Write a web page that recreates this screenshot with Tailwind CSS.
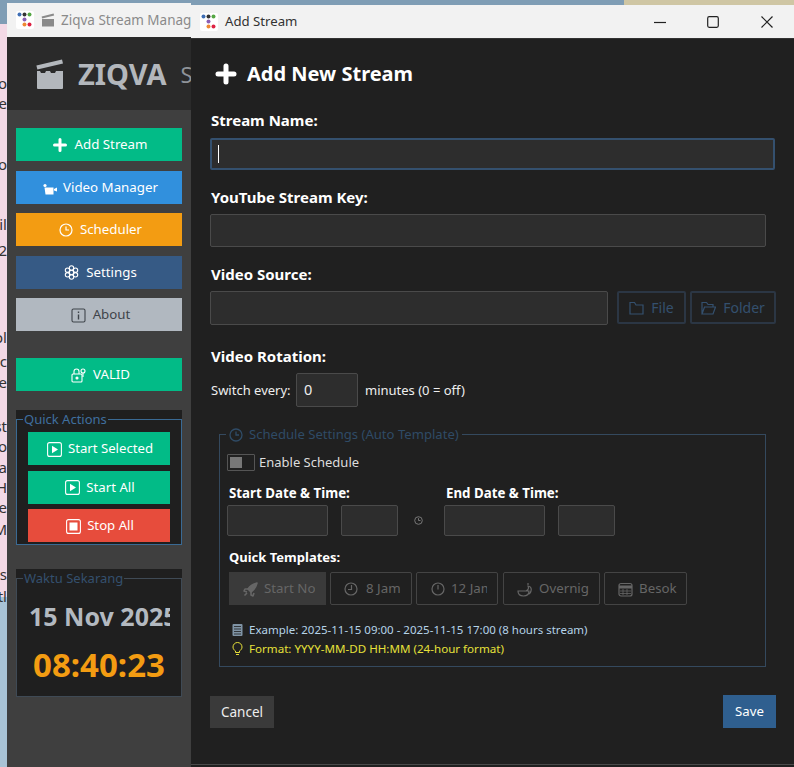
<!doctype html>
<html lang="en">
  <head>
    <meta charset="UTF-8" />
    <title>Add Stream</title>
    <script src="https://cdn.jsdelivr.net/npm/@tailwindcss/browser@4"></script>
  </head>
  <body class="relative w-[794px] h-[767px] overflow-hidden bg-[#a9c3d6] font-['Noto_Sans','Open_Sans',sans-serif]">
    <!-- desktop behind the windows -->
    <div class="absolute top-0 left-0 right-0 h-[24px] flex">
      <div class="w-[624px] bg-[#7f9db5]"></div>
      <div class="flex-1 bg-[#cfc6a4]"></div>
    </div>
    <div class="absolute top-[24px] left-0 w-[7px] h-[573px] bg-[#f3d9e6]"></div>
    <div class="absolute top-0 left-0 w-[7px] h-[767px] overflow-hidden text-[15px] leading-none text-[#333]">
      <div class="absolute top-[76px] right-0">o</div>
      <div class="absolute top-[96px] right-0">e</div>
      <div class="absolute top-[157px] right-0">o</div>
      <div class="absolute top-[217px] right-0">il</div>
      <div class="absolute top-[243px] right-0">2</div>
      <div class="absolute top-[330px] right-0">ol</div>
      <div class="absolute top-[354px] right-0">ac</div>
      <div class="absolute top-[375px] right-0">ke</div>
      <div class="absolute top-[419px] right-0">st</div>
      <div class="absolute top-[439px] right-0">Co</div>
      <div class="absolute top-[460px] right-0">na</div>
      <div class="absolute top-[480px] right-0">H</div>
      <div class="absolute top-[500px] right-0">re</div>
      <div class="absolute top-[522px] right-0">M</div>
      <div class="absolute top-[567px] right-0">os</div>
      <div class="absolute top-[589px] right-0">tl</div>
    </div>

    <!-- main window -->
    <div class="absolute left-[7px] top-[3px] w-[184px] h-[764px] flex flex-col overflow-hidden bg-[#3f3f3f]">
      <div class="h-[34px] shrink-0 bg-[#f2f2f2] flex items-center pl-[9px] gap-[7px] whitespace-nowrap text-[13.5px] text-[#8a8a8a]">
        <svg class="w-[18px] h-[18px] shrink-0" viewBox="0 0 18 18">
          <rect width="18" height="18" rx="2" fill="#fff" />
          <circle cx="3.5" cy="3.5" r="2" fill="#3f6fb5" />
          <circle cx="8.5" cy="3.5" r="2" fill="#333" />
          <circle cx="13.5" cy="3.5" r="2" fill="#55a744" />
          <circle cx="8.5" cy="8.5" r="2" fill="#8b5fb5" />
          <circle cx="8.5" cy="13.5" r="2" fill="#ee8833" />
          <circle cx="13.5" cy="13.5" r="2" fill="#dd2244" />
        </svg>
        <svg class="w-[14px] h-[14px] shrink-0" viewBox="0 0 14 14" fill="#8a8a8a">
          <path d="M1 6h12v7.5H1z" />
          <path d="M.6 3.5 12.6.6l.5 2L1.1 5.5z" />
        </svg>
        <span class="-ml-[1px]">Ziqva Stream Manager</span>
      </div>
      <div class="h-[73px] shrink-0 bg-[#2a2a2a] flex items-center pl-[29px] whitespace-nowrap text-[#b3b7bc]">
        <svg class="w-[28px] h-[30px] shrink-0" viewBox="0 0 28 30" fill="#b3b7bc">
          <path d="M1 12h26v17a1 1 0 0 1-1 1H2a1 1 0 0 1-1-1z" />
          <path d="M.4 6.5 26 .6l1 4L1.4 10.6z" />
          <path d="M4 12h6l-1 2H5zM14 12h6l-1 2h-4z" fill="#2a2a2a" />
        </svg>
        <span class="ml-[14px] text-[29px] font-bold leading-none">ZIQVA</span>
        <span class="ml-[14px] text-[22px] leading-none text-[#8f9399]">S</span>
      </div>
      <div class="flex-1 pl-[9px] pt-[18px] w-[175px]">
        <div class="flex flex-col gap-[9.5px] text-[13.3px]">
          <div class="h-[33px] pl-[3px] pt-[1px] bg-[#02bb87] flex items-center justify-center gap-[7px] text-white">
            <svg class="w-[14px] h-[14px]" viewBox="0 0 14 14" fill="none" stroke="#fff" stroke-width="3" stroke-linecap="round"><path d="M7 1.5v11M1.5 7h11" /></svg>
            Add Stream
          </div>
          <div class="h-[33px] pl-[3px] pt-[1px] bg-[#3190dd] flex items-center justify-center gap-[6px] text-white">
            <svg class="w-[14px] h-[12px] mt-[3px]" viewBox="0 0 14 12" fill="#fff">
              <circle cx="2" cy="2.5" r="1.6" />
              <path d="M1.5 4.5h9v7h-8zM11 6l3-1.5v4L11 7.5z" />
            </svg>
            Video Manager
          </div>
          <div class="h-[33px] pl-[3px] pt-[1px] bg-[#f39c12] flex items-center justify-center gap-[7px] text-white">
            <svg class="w-[14px] h-[14px]" viewBox="0 0 14 14" fill="none" stroke="#fff" stroke-width="1.2"><circle cx="7" cy="7" r="6" /><path d="M7 3.5V7h3" /></svg>
            Scheduler
          </div>
          <div class="h-[33px] pl-[3px] pt-[1px] bg-[#365a85] flex items-center justify-center gap-[7px] text-white">
            <svg class="w-[15px] h-[15px]" viewBox="0 0 15 15" fill="none" stroke="#fff" stroke-width="1.1"><circle cx="7.5" cy="7.5" r="2.2" /><circle cx="7.5" cy="3" r="2.2" /><circle cx="7.5" cy="12" r="2.2" /><circle cx="3.5" cy="5.2" r="2.2" /><circle cx="11.5" cy="5.2" r="2.2" /><circle cx="3.5" cy="9.8" r="2.2" /><circle cx="11.5" cy="9.8" r="2.2" /></svg>
            Settings
          </div>
          <div class="h-[33px] pl-[3px] pt-[1px] bg-[#b1b8c0] flex items-center justify-center gap-[7px] text-[#3f444a]">
            <svg class="w-[15px] h-[15px]" viewBox="0 0 15 15" fill="none" stroke="#3f444a" stroke-width="1.1"><rect x="1" y="1" width="13" height="13" rx="1.5" /><path d="M7.5 6.5V11.5M7.5 3.5v1.4" stroke-width="1.4" /></svg>
            About
          </div>
        </div>
        <div class="h-[33px] pl-[3px] pt-[1px] mt-[27px] bg-[#02bb87] flex items-center justify-center gap-[7px] text-[13.3px] text-white">
          <svg class="w-[15px] h-[15px]" viewBox="0 0 15 15" fill="none" stroke="#fff" stroke-width="1.1"><rect x="1" y="6" width="10" height="8" rx="1" /><path d="M3 6V3.5a2.5 2.5 0 0 1 5 0V6" /><circle cx="6" cy="10" r="1" fill="#fff" /><circle cx="12" cy="3" r="2" /><path d="M12 5v4" /></svg>
          VALID
        </div>
        <!-- quick actions -->
        <div class="relative mt-[19px] h-[135px] pt-[22px] px-[12px] bg-[#1f1f1f] flex flex-col gap-[5.5px] text-[13.2px]">
          <div class="absolute left-0 right-0 top-[9px] bottom-0 border border-[#3a6a94]"></div>
          <div class="absolute left-[7px] top-0 px-[1px] bg-[#1f1f1f] text-[13px] leading-[19px] text-[#3f6f9f]">Quick Actions</div>
          <div class="relative h-[33px] pl-[2px] pt-[1px] bg-[#02bb87] flex items-center justify-center gap-[6px] text-white">
            <svg class="w-[15px] h-[15px]" viewBox="0 0 15 15"><rect x=".6" y=".6" width="13.8" height="13.8" rx="2" fill="none" stroke="#fff" stroke-width="1.1" /><path d="M5 3.8v7.4l6-3.7z" fill="#fff" /></svg>
            Start Selected
          </div>
          <div class="relative h-[33px] pl-[2px] pt-[1px] bg-[#02bb87] flex items-center justify-center gap-[6px] text-white">
            <svg class="w-[15px] h-[15px]" viewBox="0 0 15 15"><rect x=".6" y=".6" width="13.8" height="13.8" rx="2" fill="none" stroke="#fff" stroke-width="1.1" /><path d="M5 3.8v7.4l6-3.7z" fill="#fff" /></svg>
            Start All
          </div>
          <div class="relative h-[33px] pl-[2px] pt-[1px] bg-[#e74c3c] flex items-center justify-center gap-[6px] text-white">
            <svg class="w-[15px] h-[15px]" viewBox="0 0 15 15"><rect x=".6" y=".6" width="13.8" height="13.8" rx="2" fill="none" stroke="#fff" stroke-width="1.1" /><rect x="3.5" y="3.5" width="8" height="8" fill="#fff" /></svg>
            Stop All
          </div>
        </div>
        <!-- clock -->
        <div class="relative mt-[24px] h-[128px] bg-[#1f1f1f]">
          <div class="absolute left-0 right-0 top-[9px] bottom-0 border border-[#3f4a55]"></div>
          <div class="absolute left-[7px] top-0 px-[1px] bg-[#1f1f1f] text-[13px] leading-[19px] text-[#34506e]">Waktu Sekarang</div>
          <div class="relative pt-[32px] pl-[13px] w-[154px] overflow-hidden whitespace-nowrap text-[25px] leading-[30px] font-bold text-[#b3b9c0]">15 Nov 2025</div>
          <div class="relative mt-[14px] text-center text-[33px] leading-[40px] font-bold text-[#f39c12]">08:40:23</div>
        </div>
      </div>
    </div>

    <!-- add stream dialog -->
    <div class="absolute left-[191px] top-[5px] w-[603px] h-[762px] flex flex-col bg-[#202020]">
      <div class="h-[34px] shrink-0 bg-[#f2f2f2] border-b border-[#333] flex items-center pl-[9px] text-[13.2px] text-[#333]">
        <svg class="w-[18px] h-[18px] shrink-0" viewBox="0 0 18 18">
          <rect width="18" height="18" rx="2" fill="#fff" />
          <circle cx="3.5" cy="3.5" r="2" fill="#3f6fb5" />
          <circle cx="8.5" cy="3.5" r="2" fill="#333" />
          <circle cx="13.5" cy="3.5" r="2" fill="#55a744" />
          <circle cx="8.5" cy="8.5" r="2" fill="#8b5fb5" />
          <circle cx="8.5" cy="13.5" r="2" fill="#ee8833" />
          <circle cx="13.5" cy="13.5" r="2" fill="#dd2244" />
        </svg>
        <span class="ml-[7px]">Add Stream</span>
        <div class="ml-auto flex items-center">
          <svg class="w-[12px] h-[12px]" viewBox="0 0 12 12" stroke="#222" stroke-width="1.2" fill="none"><path d="M0 6.5h12" /></svg>
          <svg class="ml-[41px] w-[12px] h-[12px]" viewBox="0 0 12 12" stroke="#222" stroke-width="1.2" fill="none"><rect x=".7" y=".7" width="10.6" height="10.6" rx="1.5" /></svg>
          <svg class="ml-[42px] mr-[21px] w-[12px] h-[12px]" viewBox="0 0 12 12" stroke="#222" stroke-width="1.2" fill="none"><path d="M.5.5l11 11M11.5.5l-11 11" /></svg>
        </div>
      </div>

      <div class="relative flex-1 border-b border-[#4a4a4a] pl-[19px] text-white">
        <div class="flex items-center h-[30px] mt-[20px] pl-[5px]">
          <svg class="w-[22px] h-[22px]" viewBox="0 0 22 22" fill="none" stroke="#fff" stroke-width="5" stroke-linecap="round"><path d="M11 3v16M3 11h16" /></svg>
          <span class="ml-[10px] text-[20px] font-bold">Add New Stream</span>
        </div>
        <div class="mt-[20px] pl-[1px] h-[22px] leading-[22px] text-[15px] font-bold">Stream Name:</div>
        <div class="mt-[7px] w-[565px] h-[32px] flex items-center pl-[6px] bg-[#2d2d2d] border-2 border-[#34506e] rounded-[2px]">
          <div class="w-px h-[18px] bg-white"></div>
        </div>
        <div class="mt-[16px] pl-[1px] h-[22px] leading-[22px] text-[15px] font-bold">YouTube Stream Key:</div>
        <div class="mt-[6px] w-[556px] h-[33px] bg-[#2d2d2d] border border-[#4a4a4a] rounded-[2px]"></div>
        <div class="mt-[16px] pl-[1px] h-[22px] leading-[22px] text-[15px] font-bold">Video Source:</div>
        <div class="mt-[6px] flex h-[34px]">
          <div class="w-[398px] bg-[#2d2d2d] border border-[#4a4a4a] rounded-[2px]"></div>
          <div class="ml-[9px] w-[69px] h-[33px] border-2 border-[#2b3644] rounded-[2px] flex items-center justify-center gap-[7px] text-[14px] text-[#34506e]">
            <svg class="w-[15px] h-[14px]" viewBox="0 0 15 14" fill="none" stroke="#34506e" stroke-width="1.2"><path d="M1 2.5V13h13V4H7L5.5 1.5H1z" /></svg>
            File
          </div>
          <div class="ml-[4px] w-[86px] h-[33px] border-2 border-[#2b3644] rounded-[2px] flex items-center justify-center gap-[7px] text-[14px] text-[#34506e]">
            <svg class="w-[15px] h-[14px]" viewBox="0 0 15 14" fill="none" stroke="#34506e" stroke-width="1.2"><path d="M1 13V1.5h4.5L7 3.5h5V6M1 13l2.5-7H14.5L12 13z" /></svg>
            Folder
          </div>
        </div>
        <div class="mt-[20px] pl-[1px] h-[22px] leading-[22px] text-[15px] font-bold">Video Rotation:</div>
        <div class="mt-[6px] flex items-center gap-[6px] h-[34px] pl-[1px] text-[13px] text-[#eee]">
          <span class="w-[79px] pt-[1px] whitespace-nowrap">Switch every:</span>
          <div class="w-[62px] h-[34px] flex items-center pl-[7px] bg-[#2d2d2d] border border-[#4a4a4a] rounded-[2px] text-[14.5px]">0</div>
          <span class="ml-[1px] pt-[1px]">minutes (0 = off)</span>
        </div>

        <!-- schedule group -->
        <div class="relative mt-[27px] ml-[9px] w-[547px] h-[233px] border border-[#34495e]">
          <div class="absolute left-[6px] -top-[10px] h-[20px] px-[3px] bg-[#202020] flex items-center gap-[6px] text-[13.1px] text-[#2f4b66]">
            <svg class="w-[14px] h-[14px]" viewBox="0 0 14 14" fill="none" stroke="#2f4b66" stroke-width="1.3"><circle cx="7" cy="7" r="6" /><path d="M7 3.5V7h3" /></svg>
            Schedule Settings (Auto Template)
          </div>
          <div class="ml-[7px] mt-[19px] flex items-center h-[17px]">
            <div class="w-[28px] h-[17px] border border-[#555] rounded-[1px] p-[2px]"><div class="w-[12px] h-full bg-[#777]"></div></div>
            <span class="ml-[4px] pt-[1px] text-[13px] text-[#ddd]">Enable Schedule</span>
          </div>
          <div class="flex ml-[9px] mt-[13px] h-[18px] leading-[18px] text-[13.3px] font-bold">
            <span class="w-[217px]">Start Date &amp; Time:</span>
            <span>End Date &amp; Time:</span>
          </div>
          <div class="flex items-center ml-[7px] mt-[3px] h-[31px]">
            <div class="w-[101px] h-full bg-[#2d2d2d] border border-[#4a4a4a] rounded-[2px]"></div>
            <div class="ml-[13px] w-[57px] h-full bg-[#2d2d2d] border border-[#4a4a4a] rounded-[2px]"></div>
            <svg class="ml-[16px] w-[9px] h-[9px]" viewBox="0 0 9 9" fill="none" stroke="#777" stroke-width="1"><circle cx="4.5" cy="4.5" r="3.8" /><path d="M4.5 2.2v2.3h2" /></svg>
            <div class="ml-[21px] w-[101px] h-full bg-[#2d2d2d] border border-[#4a4a4a] rounded-[2px]"></div>
            <div class="ml-[13px] w-[57px] h-full bg-[#2d2d2d] border border-[#4a4a4a] rounded-[2px]"></div>
          </div>
          <div class="ml-[9px] mt-[12px] h-[18px] leading-[18px] text-[13px] font-bold">Quick Templates:</div>
          <div class="flex ml-[9px] mt-[6px] gap-[4px] h-[33px] text-[13.3px] text-[#666]">
            <div class="w-[97px] pt-[1px] bg-[#3a3a3a] flex items-center pl-[14px] pr-[11px] gap-[6px] whitespace-nowrap">
              <svg class="w-[15px] h-[15px] shrink-0" viewBox="0 0 15 15" fill="none" stroke="#666" stroke-width="1.6" stroke-linejoin="round"><path d="M5 7c2-3 5-5 9-6-1 4-3 7-6 9z" fill="#666" /><path d="M5 7H2L1 9l3 1M8 10v3l2 1 1-3M4 11l-2.500 2.500" /></svg>
              <span class="overflow-hidden">Start Now</span>
            </div>
            <div class="w-[82px] pt-[1px] border border-[#444] rounded-[2px] flex items-center pl-[13px] pr-[11px] gap-[8px] whitespace-nowrap">
              <svg class="w-[14px] h-[14px] shrink-0" viewBox="0 0 14 14" fill="none" stroke="#666" stroke-width="1.2"><circle cx="7" cy="7" r="6" /><path d="M7.500 3v4.500H4" /></svg>
              <span class="overflow-hidden">8 Jam</span>
            </div>
            <div class="w-[82px] pt-[1px] border border-[#444] rounded-[2px] flex items-center pl-[14px] pr-[10px] gap-[6px] whitespace-nowrap">
              <svg class="w-[14px] h-[14px] shrink-0" viewBox="0 0 14 14" fill="none" stroke="#666" stroke-width="1.2"><circle cx="7" cy="7" r="6" /><path d="M7 3v4.500" /></svg>
              <span class="overflow-hidden">12 Jam</span>
            </div>
            <div class="ml-[1px] w-[97px] pt-[1px] border border-[#444] rounded-[2px] flex items-center pl-[13px] pr-[10px] gap-[6px] whitespace-nowrap">
              <svg class="w-[16px] h-[15px] shrink-0" viewBox="0 0 16 15" fill="none" stroke="#666" stroke-width="1.2"><path d="M1 9h11c0 3-2 5-5.500 5S1 12 1 9zM9 9c2-1 3-3 2-5 2 0 4 2 3 5-.5 2-2 3-3 3" /><path d="M11 1v2" /></svg>
              <span class="overflow-hidden">Overnight</span>
            </div>
            <div class="w-[83px] pt-[1px] border border-[#444] rounded-[2px] flex items-center pl-[13px] pr-[10px] gap-[6px] whitespace-nowrap">
              <svg class="w-[15px] h-[15px] shrink-0" viewBox="0 0 15 15" fill="none" stroke="#666" stroke-width="1.2"><rect x="1" y="1.500" width="13" height="12.500" rx="2" /><path d="M1 5h13" stroke-width="3" /><path d="M5 7v6M9 7v6M2 9h11M2 11.500h11" stroke-width=".8" /></svg>
              <span>Besok</span>
            </div>
          </div>
          <div class="ml-[12px] mt-[15px] flex items-center h-[19px] gap-[6px] text-[11.5px] text-[#b5d3e8]">
            <svg class="w-[11px] h-[12px]" viewBox="0 0 11 12" fill="#7f93a5"><rect x=".5" width="10" height="12" rx="1" /><path d="M2 2.500h7M2 5h7M2 7.500h7M2 10h7" stroke="#202020" stroke-width=".8" /></svg>
            Example: 2025-11-15 09:00 - 2025-11-15 17:00 (8 hours stream)
          </div>
          <div class="ml-[12px] flex items-center h-[19px] gap-[6px] text-[11.6px] text-[#e6e03a]">
            <svg class="w-[11px] h-[13px]" viewBox="0 0 11 13" fill="none" stroke="#e6e03a" stroke-width="1"><path d="M3.500 9C2 8 1 6.800 1 5a4.500 4.500 0 0 1 9 0c0 1.800-1 3-2.500 4v1.500h-4zM4 12.500h3" /></svg>
            Format: YYYY-MM-DD HH:MM (24-hour format)
          </div>
        </div>
        <div class="flex justify-between mt-[28px] w-[566px]">
          <div class="w-[64px] h-[32px] mt-[1px] pt-[1px] bg-[#3a3a3a] flex items-center justify-center text-[13.5px] text-[#eee]">Cancel</div>
          <div class="w-[53px] h-[33px] pt-[1px] bg-[#2f5f8f] flex items-center justify-center text-[13.2px] text-white">Save</div>
        </div>
      </div>
      <div class="h-[2px] shrink-0"></div>
    </div>
  </body>
</html>
